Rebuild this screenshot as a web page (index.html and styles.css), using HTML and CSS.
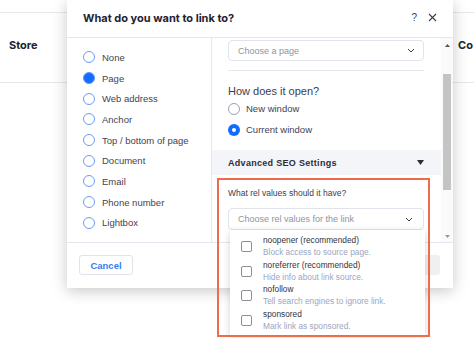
FILE: index.html
```html
<!DOCTYPE html>
<html lang="en">
<head>
<meta charset="utf-8">
<title>Link dialog</title>
<link rel="stylesheet" href="styles.css">
</head>
<body>
<div class="site">
  <div class="site-nav">
    <span class="nav-item">Store</span>
    <span class="nav-item nav-co">Co</span>
  </div>
</div>

<div class="dialog">
  <div class="dlg-head">
    <h1 class="dlg-title">What do you want to link to?</h1>
    <div class="head-actions">
      <span class="help">?</span>
      <svg class="close" width="9" height="9" viewBox="0 0 9 9"><path d="M1 1L8 8M8 1L1 8" stroke="#3b3d4e" stroke-width="1.1" fill="none"/></svg>
    </div>
  </div>
  <div class="dlg-body">
    <ul class="types">
      <li class="opt"><span class="radio"></span>None</li>
      <li class="opt"><span class="radio on"></span>Page</li>
      <li class="opt"><span class="radio"></span>Web address</li>
      <li class="opt"><span class="radio"></span>Anchor</li>
      <li class="opt"><span class="radio"></span>Top / bottom of page</li>
      <li class="opt"><span class="radio"></span>Document</li>
      <li class="opt"><span class="radio"></span>Email</li>
      <li class="opt"><span class="radio"></span>Phone number</li>
      <li class="opt"><span class="radio"></span>Lightbox</li>
    </ul>
    <div class="panel">
      <div class="panel-content">
        <div class="select select-page">
          <span>Choose a page</span>
          <svg class="chev" width="8" height="5" viewBox="0 0 8 5"><path d="M1 1l3 3 3-3" stroke="#3b3d4e" stroke-width="1" fill="none"/></svg>
        </div>
        <div class="divider"></div>
        <p class="question">How does it open?</p>
        <div class="opt opt-r"><span class="radio radio-grey"></span>New window</div>
        <div class="opt opt-r"><span class="radio cur"></span>Current window</div>
        <div class="seo">
          <span>Advanced SEO Settings</span>
          <svg width="7" height="5" viewBox="0 0 7 5"><path d="M0 0h7L3.5 5z" fill="#2b2e3a"/></svg>
        </div>
        <p class="rel-label">What rel values should it have?</p>
        <div class="select select-rel">
          <span>Choose rel values for the link</span>
          <svg class="chev" width="8" height="5" viewBox="0 0 8 5"><path d="M1 1l3 3 3-3" stroke="#3b3d4e" stroke-width="1" fill="none"/></svg>
        </div>
      </div>
      <div class="scrollbar">
        <svg class="arr" width="5" height="3" viewBox="0 0 5 3"><path d="M0 3L2.5 0 5 3z" fill="#555"/></svg>
        <div class="track"><div class="thumb"></div></div>
        <svg class="arr" width="5" height="3" viewBox="0 0 5 3"><path d="M0 0h5L2.5 3z" fill="#999"/></svg>
      </div>
    </div>
  </div>
  <div class="dlg-foot">
    <button class="btn-cancel">Cancel</button>
    <button class="btn-done">Done</button>
  </div>
</div>

<div class="rel-menu">
  <div class="rel-item">
    <span class="check"></span>
    <div class="rel-text"><div class="rel-name">noopener (recommended)</div><div class="rel-desc">Block access to source page.</div></div>
  </div>
  <div class="rel-item">
    <span class="check"></span>
    <div class="rel-text"><div class="rel-name">noreferrer (recommended)</div><div class="rel-desc">Hide info about link source.</div></div>
  </div>
  <div class="rel-item">
    <span class="check"></span>
    <div class="rel-text"><div class="rel-name">nofollow</div><div class="rel-desc">Tell search engines to ignore link.</div></div>
  </div>
  <div class="rel-item">
    <span class="check"></span>
    <div class="rel-text"><div class="rel-name">sponsored</div><div class="rel-desc">Mark link as sponsored.</div></div>
  </div>
</div>

<div class="highlight"></div>
</body>
</html>
```

FILE: styles.css
```css
* { box-sizing: border-box; }
html, body { margin: 0; padding: 0; }
body {
  width: 474px;
  height: 338px;
  overflow: hidden;
  position: relative;
  background: #fff;
  font-family: "Liberation Sans", Arial, sans-serif;
  color: #3b3d4e;
}

/* background site */
.site { padding-top: 12px; }
.site-nav {
  height: 71px;
  border-top: 1px solid #e6e8ec;
  border-bottom: 1px solid #e6e8ec;
  display: flex;
  align-items: center;
  padding: 0 0 6px 9px;
}
.nav-item {
  font-family: Inter, "Liberation Sans", sans-serif;
  font-weight: 700;
  font-size: 11px;
  color: #20232b;
}
.nav-co { margin-left: auto; margin-right: 1px; }

/* dialog */
.dialog {
  position: absolute;
  left: 67px;
  top: 0;
  width: 386px;
  height: 288px;
  background: #fff;
  box-shadow: 0 3px 14px rgba(0, 0, 0, 0.22);
  display: flex;
  flex-direction: column;
}
.dlg-head {
  height: 38px;
  border-bottom: 1px solid #e5e7ee;
  display: flex;
  align-items: center;
  justify-content: space-between;
  padding: 0 16px 2px 16px;
  flex: none;
}
.dlg-title {
  margin: 0;
  font-family: Inter, "Liberation Sans", sans-serif;
  font-weight: 700;
  font-size: 11px;
  color: #1f2230;
}
.head-actions {
  display: flex;
  align-items: center;
  gap: 11px;
}
.help { font-size: 10px; color: #3b3d4e; }
.close { display: block; }

.dlg-body {
  height: 204px;
  display: flex;
  flex: none;
  overflow: hidden;
}
.types {
  list-style: none;
  margin: 0;
  padding: 9px 0 0 16px;
  width: 145px;
  border-right: 1px solid #e5e7ee;
  flex: none;
}
.opt {
  height: 20.7px;
  display: flex;
  align-items: center;
  gap: 7px;
  font-size: 9.5px;
  color: #3f4352;
}
.radio {
  width: 12px;
  height: 12px;
  border-radius: 50%;
  border: 1.3px solid #6d9bf3;
  flex: none;
  background: #fff;
}
.radio.on {
  background: #116dff;
  border-color: #5f95ff;
}
.radio.cur {
  background: #116dff;
  border: none;
  position: relative;
}
.radio.cur::after {
  content: "";
  position: absolute;
  left: 4px;
  top: 4px;
  width: 4px;
  height: 4px;
  border-radius: 50%;
  background: #fff;
}
.radio.radio-grey { border-color: #9aa0ad; }

.panel {
  flex: 1;
  display: flex;
  overflow: hidden;
}
.panel-content {
  flex: 1;
  padding: 2px 17px 0 16px;
  overflow: hidden;
}
.select {
  border: 1px solid #e0e3ec;
  border-radius: 4px;
  display: flex;
  align-items: center;
  justify-content: space-between;
  padding: 0 8px 0 9px;
  font-size: 9px;
  color: #8e94a3;
}
.select-page { height: 21px; }
.chev { display: block; }
.divider {
  margin-top: 9px;
  height: 1px;
  background: #e5e7ee;
}
.question {
  margin: 13px 0 0;
  height: 14px;
  line-height: 14px;
  font-size: 11px;
  color: #3b3d4e;
}
.opt-r { height: 21px; gap: 6px; font-size: 9.5px; }
.seo {
  margin: 10px -17px 0 -16px;
  height: 25px;
  background: #f3f5f8;
  display: flex;
  align-items: center;
  justify-content: space-between;
  padding: 0 17px 0 16px;
  font-size: 9px;
  font-weight: 700;
  letter-spacing: 0.3px;
  color: #2b2e3a;
}
.seo svg { display: block; }
.rel-label {
  margin: 12px 0 0;
  height: 12px;
  line-height: 12px;
  font-size: 8.5px;
  color: #3b3d4e;
}
.select-rel {
  margin-top: 9px;
  height: 22px;
  padding-right: 10px;
}

.scrollbar {
  width: 12px;
  flex: none;
  display: flex;
  flex-direction: column;
  align-items: center;
  padding: 6px 0 4px;
  background: #fafafa;
}
.arr { display: block; flex: none; }
.track {
  flex: 1;
  width: 100%;
  padding: 24px 2px 0;
  margin: 3px 0;
}
.thumb {
  height: 116px;
  background: #c4c4c4;
}

.dlg-foot {
  flex: 1;
  border-top: 1px solid #e5e7ee;
  display: flex;
  align-items: flex-start;
  justify-content: space-between;
  padding: 12px 13px 0 12px;
}
.btn-cancel {
  height: 20px;
  width: 54px;
  border: 1px solid #dfe3ea;
  border-radius: 3px;
  background: #fff;
  font-family: "Liberation Sans", Arial, sans-serif;
  font-size: 9.5px;
  font-weight: 700;
  color: #3a7bf0;
  padding: 0;
}
.btn-done {
  height: 20px;
  width: 52px;
  border: none;
  border-radius: 3px;
  background: #f0f0f0;
  font-family: "Liberation Sans", Arial, sans-serif;
  font-size: 9.5px;
  color: #c8c8c8;
  padding: 0;
}

/* rel dropdown menu */
.rel-menu {
  position: absolute;
  left: 230px;
  top: 230px;
  width: 195px;
  height: 105px;
  background: #fff;
  box-shadow: 0 2px 7px rgba(0, 0, 0, 0.18);
  padding: 4px 0 0 11px;
}
.rel-item {
  height: 24.7px;
  display: flex;
  align-items: center;
  gap: 11px;
}
.check {
  width: 11px;
  height: 11px;
  border: 1px solid #8c8f98;
  border-radius: 2px;
  flex: none;
}
.rel-text { font-size: 8.3px; }
.rel-name { height: 12px; line-height: 12px; color: #2f333d; }
.rel-desc { height: 13px; line-height: 13px; color: #9ba6bf; }

.highlight {
  position: absolute;
  left: 217px;
  top: 178px;
  width: 213px;
  height: 159px;
  border: 2px solid #ee6b4d;
}
```
